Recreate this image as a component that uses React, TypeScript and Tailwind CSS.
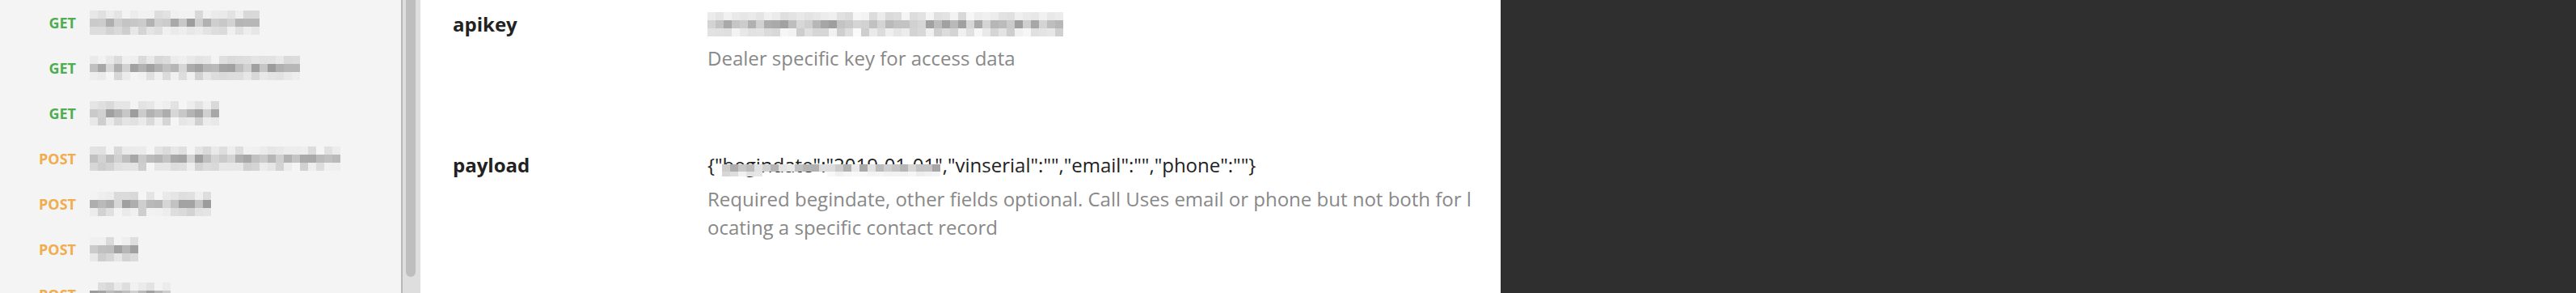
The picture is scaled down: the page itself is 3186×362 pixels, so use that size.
import React from "react";

type Endpoint = { method: "GET" | "POST"; cols: number; seed: number };

const endpoints: Endpoint[] = [
  { method: "GET", cols: 21, seed: 3 },
  { method: "GET", cols: 26, seed: 11 },
  { method: "GET", cols: 16, seed: 19 },
  { method: "POST", cols: 31, seed: 27 },
  { method: "POST", cols: 15, seed: 35 },
  { method: "POST", cols: 6, seed: 43 },
  { method: "POST", cols: 10, seed: 51 },
];

// cheap deterministic noise so the blurred bits look the same every run
function noise(n: number) {
  const x = Math.sin(n * 12.9898) * 43758.5453;
  return x - Math.floor(x);
}

function shade(v: number) {
  const c = Math.round(v);
  return `rgb(${c},${c},${c})`;
}

// pixelated stand-in for redacted text: light row, dark row, light row
function Mosaic({ cols, seed, cell = 10, bg = 245 }: { cols: number; seed: number; cell?: number; bg?: number }) {
  const rows = [
    { lo: 215, hi: bg },
    { lo: 155, hi: 215 },
    { lo: 205, hi: bg },
  ];
  return (
    <div className="flex flex-col">
      {rows.map((r, ri) => (
        <div key={ri} className="flex">
          {Array.from({ length: cols }).map((_, ci) => {
            const n = noise(seed * 97 + ri * 31 + ci * 7);
            return (
              <div
                key={ci}
                style={{ width: cell, height: cell, backgroundColor: shade(r.lo + (r.hi - r.lo) * n) }}
              />
            );
          })}
        </div>
      ))}
    </div>
  );
}

function Sidebar() {
  return (
    <aside className="w-[496px] shrink-0 bg-[#f5f4f5] font-['Open_Sans',sans-serif]">
      {endpoints.map((e, i) => (
        <div key={i} className="flex h-[56px] items-center">
          <span
            className={
              "w-[94px] text-right text-[18px] font-bold " +
              (e.method === "GET" ? "text-[#4cae4f]" : "text-[#f0ad4e]")
            }
          >
            {e.method}
          </span>
          <div className="ml-[17px]">
            <Mosaic cols={e.cols} seed={e.seed} />
          </div>
        </div>
      ))}
    </aside>
  );
}

function Scrollbar() {
  return (
    <div className="w-[24px] shrink-0 border-l-2 border-[#b8b8b8] bg-[#dedede] pl-[4px]">
      <div className="h-[342px] w-[12px] rounded-b-full bg-[#bebebe]" />
    </div>
  );
}

function ParamRow({ name, children }: { name: string; children: React.ReactNode }) {
  return (
    <div className="flex">
      <div className="w-[315px] shrink-0 text-[24px] font-bold leading-[35px] text-[#222]">{name}</div>
      <div className="w-[945px] break-all">{children}</div>
    </div>
  );
}

function Params() {
  return (
    <main className="w-[1336px] shrink-0 bg-white pl-[40px] pt-[12px] font-['Open_Sans',sans-serif]">
      <div className="flex flex-col gap-[97px]">
        <ParamRow name="apikey">
          <div className="flex h-[35px] items-center">
            <Mosaic cols={44} seed={77} bg={250} />
          </div>
          <p className="mt-[7px] text-[24px] leading-[35px] text-[#888]">Dealer specific key for access data</p>
        </ParamRow>
        <ParamRow name="payload">
          <div className="relative text-[24px] leading-[35px] text-[#222]">
            {'{"begindate":"2019-01-01","vinserial":"","email":"","phone":""}'}
            <div className="absolute left-[18px] top-[17px] flex">
              {Array.from({ length: 27 }).map((_, ci) => (
                <div key={ci} className="flex flex-col">
                  <div
                    className="h-[9px] w-[10px]"
                    style={{ backgroundColor: shade(160 + 75 * noise(200 + ci)) }}
                  />
                  <div
                    className="h-[6px] w-[10px]"
                    style={{ backgroundColor: ci < 5 ? shade(210 + 35 * noise(300 + ci)) : ci > 12 ? shade(236 + 14 * noise(400 + ci)) : "transparent" }}
                  />
                </div>
              ))}
            </div>
          </div>
          <p className="mt-[7px] text-[24px] leading-[35px] text-[#888]">
            Required begindate, other fields optional. Call Uses email or phone but not both for locating a specific contact record
          </p>
        </ParamRow>
      </div>
    </main>
  );
}

export default function App() {
  return (
    <div className="flex h-[362px] w-[3186px] overflow-hidden">
      <Sidebar />
      <Scrollbar />
      <Params />
      <div className="flex-1 bg-[#2f2f2f]" />
    </div>
  );
}
